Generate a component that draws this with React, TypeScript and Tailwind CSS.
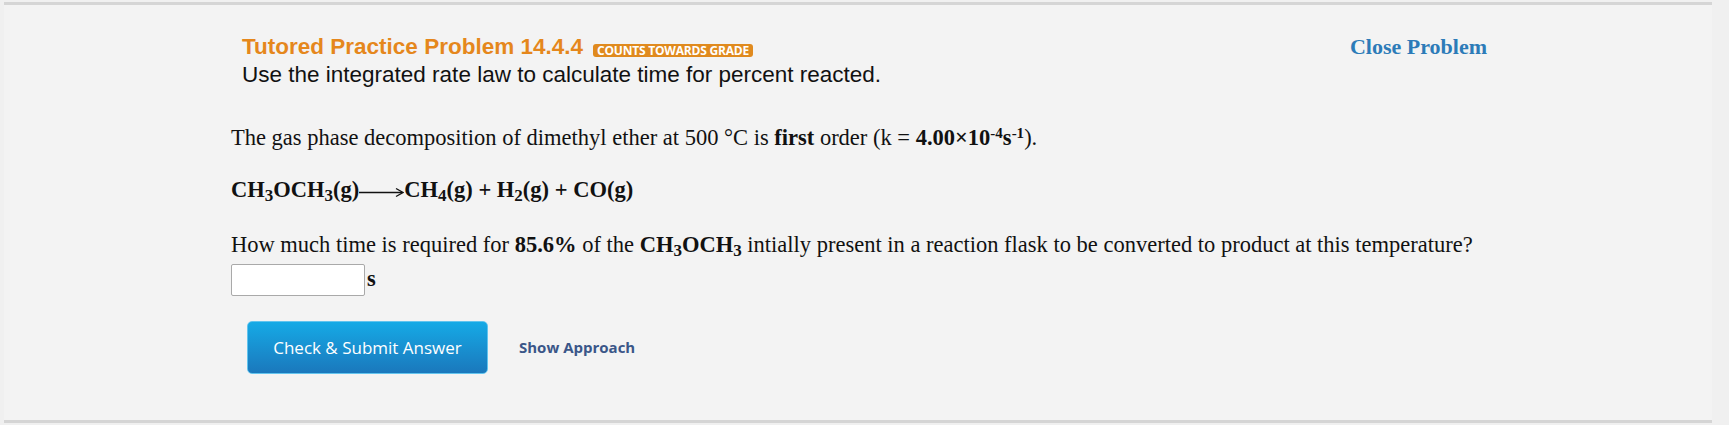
export default function App() {
  const serif = { fontFamily: '"Liberation Serif", "Times New Roman", serif' };
  return (
    <div className="h-[425px] w-full bg-[#f0f0f0] pt-[2px]">
      <div className="ml-[4px] h-[421px] w-[1708px] border-t-[3px] border-b-[3px] border-[#d5d5d5] bg-[#f3f3f3]">
        <div className="flex w-[1483px] items-start justify-between pl-[238px] pt-[29px]">
          <div>
            <div className="flex items-start gap-[10px]">
              <span className="font-['Liberation_Sans',Arial,sans-serif] text-[22.5px] font-bold leading-[26px] text-[#e5871c]">
                Tutored Practice Problem 14.4.4
              </span>
              <span className="mt-[10px] rounded-[3px] bg-[#e08a1e] px-[4px] font-['Open_Sans',sans-serif] text-[12px] font-bold leading-[13px] tracking-[-0.2px] text-white">
                COUNTS TOWARDS GRADE
              </span>
            </div>
            <div className="mt-[2px] font-['Liberation_Sans',Arial,sans-serif] text-[22.5px] leading-[26px] text-[#111]">
              Use the integrated rate law to calculate time for percent reacted.
            </div>
          </div>
          <a className="text-[22px] font-bold leading-[26px] text-[#2c7bb8]" style={serif} href="#">
            Close Problem
          </a>
        </div>

        <div className="pl-[227px] text-[22.5px] leading-[26px] text-[#111]" style={serif}>
          <p className="mt-[37px]">
            The gas phase decomposition of dimethyl ether at 500 °C is <b>first</b> order (k = <b>4.00×10<sup className="text-[15px]">-4</sup>s<sup className="text-[15px]">-1</sup></b>).
          </p>
          <p className="mt-[26px] font-bold">
            CH<sub className="text-[17px]">3</sub>OCH<sub className="text-[17px]">3</sub>(g)
            <svg className="inline-block align-middle" width="45" height="12" viewBox="0 0 45 12">
              <path d="M0 6.5H43" stroke="#111" strokeWidth="1.3" fill="none" />
              <path d="M37 2.5L44 6.5L37 10.5" stroke="#111" strokeWidth="1.3" fill="none" />
            </svg>
            CH<sub className="text-[17px]">4</sub>(g) + H<sub className="text-[17px]">2</sub>(g) + CO(g)
          </p>
          <p className="mt-[29px]">
            How much time is required for <b>85.6%</b> of the <b>CH<sub className="text-[17px]">3</sub>OCH<sub className="text-[17px]">3</sub></b> intially present in a reaction flask to be converted to product at this temperature?
          </p>
          <div className="mt-[6px] flex items-center">
            <input className="h-[32px] w-[134px] rounded-[2px] border border-[#a9a9a9] bg-white" />
            <b className="ml-[2px] mt-[-2px]">s</b>
          </div>
        </div>

        <div className="mt-[25px] flex items-center pl-[243px]">
          <button className="h-[53px] w-[241px] rounded-[5px] border border-[#62c4ee] bg-gradient-to-b from-[#15aae6] to-[#1a78bc] font-['Open_Sans',sans-serif] text-[17px] text-white">
            Check &amp; Submit Answer
          </button>
          <a className="ml-[31px] font-['Open_Sans',sans-serif] text-[15px] font-bold text-[#3a5688]" href="#">
            Show Approach
          </a>
        </div>
      </div>
    </div>
  );
}
